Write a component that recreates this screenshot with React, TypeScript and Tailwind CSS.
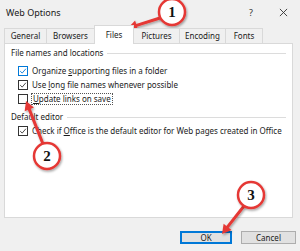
import React from "react";

const tabs = [
  { t: "General", w: "w-[43px]" },
  { t: "Browsers", w: "w-[49px]" },
  { t: "Files", w: "w-[40px]" },
  { t: "Pictures", w: "w-[47px]" },
  { t: "Encoding", w: "w-[47px]" },
  { t: "Fonts", w: "w-[38px]" },
];

function Check({ checked, blue }: { checked?: boolean; blue?: boolean }) {
  return (
    <span
      className={`flex h-[10px] w-[10px] shrink-0 items-center justify-center border bg-white ${
        blue ? "border-[#0078d7]" : "border-[#333333]"
      }`}
    >
      {checked && (
        <svg viewBox="0 0 10 10" className="h-[8px] w-[8px]">
          <path d="M1.5 5.2 L4 7.6 L8.6 2.2" fill="none" stroke={blue ? "#0078d7" : "#333333"} strokeWidth={1.1} />
        </svg>
      )}
    </span>
  );
}

function Group({ label }: { label: string }) {
  return (
    <div className="flex items-center gap-[4px]">
      <span className="whitespace-nowrap">{label}</span>
      <span className="h-px flex-1 bg-[#dcdcdc]" />
    </div>
  );
}

function Arrow({ x1, y1, x2, y2 }: { x1: number; y1: number; x2: number; y2: number }) {
  const a = Math.atan2(y2 - y1, x2 - x1);
  const len = 9;
  const w = 5;
  const bx = x2 - len * Math.cos(a);
  const by = y2 - len * Math.sin(a);
  const px = -Math.sin(a) * w;
  const py = Math.cos(a) * w;
  return (
    <g filter="url(#sh)">
      <line x1={x1} y1={y1} x2={bx} y2={by} stroke="#e53935" strokeWidth={3} strokeLinecap="round" />
      <polygon points={`${x2},${y2} ${bx + px},${by + py} ${bx - px},${by - py}`} fill="#e53935" />
    </g>
  );
}

function Badge({ cx, cy, n }: { cx: number; cy: number; n: string }) {
  return (
    <g>
      <circle cx={cx} cy={cy} r={13} fill="#ffffff" stroke="#e53935" strokeWidth={2.5} filter="url(#sh)" />
      <text
        x={cx}
        y={cy + 5}
        textAnchor="middle"
        fontFamily="'Liberation Serif', serif"
        fontWeight="bold"
        fontSize={15}
        fill="#111111"
      >
        {n}
      </text>
    </g>
  );
}

export default function App() {
  return (
    <div className="relative h-[251px] w-[300px] overflow-hidden bg-[#f0f0f0] font-['Noto_Sans',sans-serif] text-[8px] leading-none text-[#1a1a1a]">
      {/* Title bar */}
      <div className="flex h-[25px] items-center justify-between pl-[6px] pr-[12px]">
        <span className="text-[9px]">Web Options</span>
        <div className="flex items-center gap-[26px] text-[#333333]">
          <span className="text-[9px]">?</span>
          <svg viewBox="0 0 10 10" className="h-[9px] w-[9px]">
            <path d="M1 1 L9 9 M9 1 L1 9" stroke="#333333" strokeWidth={1} />
          </svg>
        </div>
      </div>

      {/* Tabs */}
      <div className="relative z-10 flex h-[18px] items-end pl-[4px]">
        {tabs.map(({ t, w }) => (
          <div
            key={t}
            className={
              t === "Files"
                ? `-mb-px -ml-px flex h-[19px] items-center justify-center border border-b-0 border-[#d9d9d9] bg-white ${w}`
                : `-ml-px flex h-[15px] items-center justify-center border border-b-0 border-[#d9d9d9] bg-[#f0f0f0] first:ml-0 ${w}`
            }
          >
            {t}
          </div>
        ))}
      </div>

      {/* Panel */}
      <div className="ml-[4px] flex h-[175px] w-[289px] flex-col border border-[#d9d9d9] bg-white px-[6px] pt-[5px]">
        <Group label="File names and locations" />
        <div className="mt-[9px] flex flex-col gap-[4px] pl-[7px]">
          <div className="flex h-[10px] items-center gap-[4px]">
            <Check checked blue />
            <span>
              Organize <u>s</u>upporting files in a folder
            </span>
          </div>
          <div className="flex h-[10px] items-center gap-[4px]">
            <Check checked />
            <span>
              Use <u>l</u>ong file names whenever possible
            </span>
          </div>
          <div className="flex h-[10px] items-center gap-[3px]">
            <Check />
            <span className="border border-dotted border-[#555555] px-px py-px">
              <u>U</u>pdate links on save
            </span>
          </div>
        </div>
        <div className="mt-[9px]">
          <Group label="Default editor" />
        </div>
        <div className="mt-[5px] flex h-[10px] items-center gap-[4px] pl-[7px]">
          <Check checked />
          <span className="whitespace-nowrap">
            Check if <u>O</u>ffice is the default editor for Web pages created in Office
          </span>
        </div>
      </div>

      {/* Buttons */}
      <div className="mt-[13px] flex justify-end gap-[9px] pr-[4px]">
        <button className="flex h-[13px] w-[52px] items-center justify-center border border-[#0078d7] bg-[#e1e1e1] outline outline-1 -outline-offset-2 outline-[#0078d7]">
          OK
        </button>
        <button className="flex h-[13px] w-[55px] items-center justify-center border border-[#adadad] bg-[#e1e1e1]">
          Cancel
        </button>
      </div>

      {/* Annotations */}
      <svg className="pointer-events-none absolute left-0 top-0" width={300} height={251}>
        <defs>
          <filter id="sh" x="-50%" y="-50%" width="200%" height="200%">
            <feDropShadow dx="1" dy="1.5" stdDeviation="1.2" floodColor="#000" floodOpacity="0.35" />
          </filter>
        </defs>
        <Arrow x1={160} y1={18} x2={128} y2={28} />
        <Badge cx={172} cy={12} n="1" />
        <Arrow x1={43} y1={144} x2={26} y2={101} />
        <Badge cx={47} cy={156} n="2" />
        <Arrow x1={244} y1={206} x2={222} y2={234} />
        <Badge cx={251} cy={195} n="3" />
      </svg>
    </div>
  );
}
